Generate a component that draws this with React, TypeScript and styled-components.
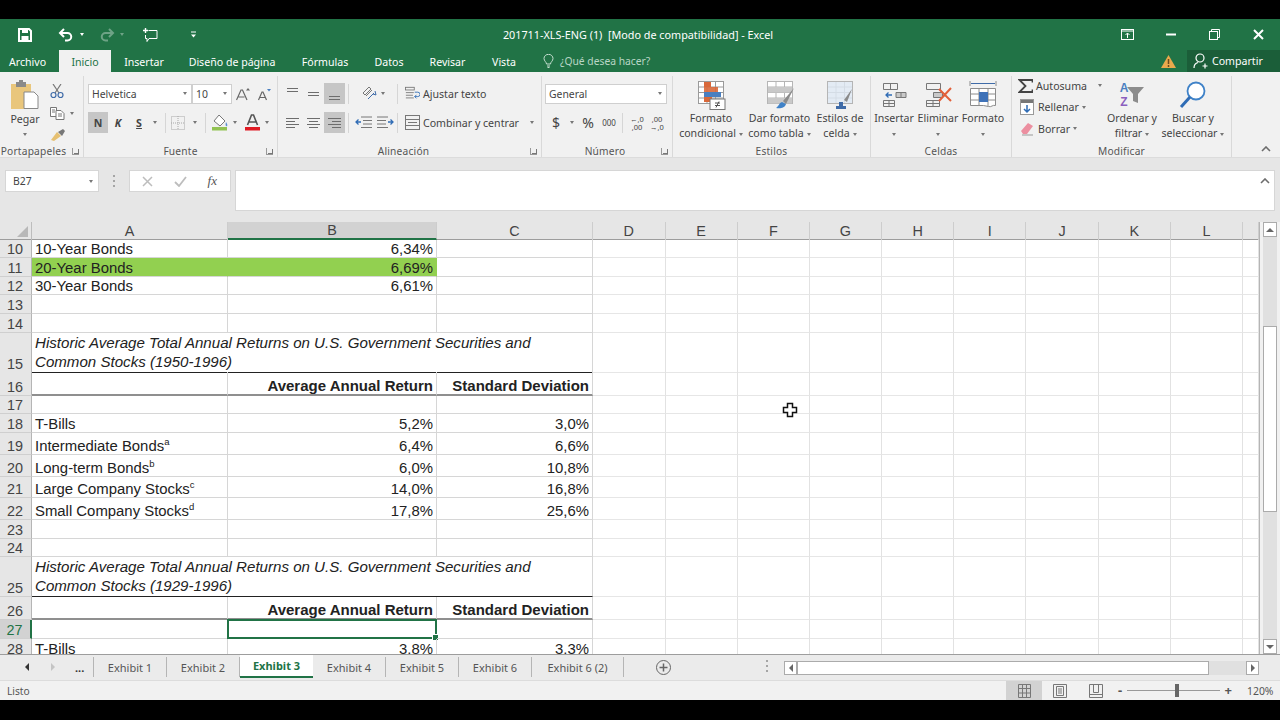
import React from 'react'
import styled, { createGlobalStyle } from 'styled-components'

const GlobalStyle = createGlobalStyle`
    html, body { margin: 0; padding: 0; background: #000; }
    * { box-sizing: border-box; }
`

const uiFont = `'Noto Sans', 'Open Sans', sans-serif`
const sheetFont = `'Liberation Sans', Arial, sans-serif`
const green = '#217346'

const Page = styled.div`
    width: 1280px;
    height: 720px;
    background: #000;
    padding: 19px 0 20px;
    display: flex;
    flex-direction: column;
    overflow: hidden;
    font-family: ${uiFont};
`

/* title bar */
const TitleBar = styled.div`
    height: 31px;
    flex: none;
    background: ${green};
    color: #fff;
    display: grid;
    grid-template-columns: 1fr auto 1fr;
    align-items: center;
`
const Qat = styled.div`
    display: flex;
    align-items: center;
    padding-left: 17px;
`
const QatSlot = styled.div<{ $w: number; $l?: number }>`
    width: ${p => p.$w}px;
    margin-left: ${p => p.$l ?? 0}px;
    display: flex;
    justify-content: center;
    align-items: center;
    flex: none;
`
const Title = styled.div`
    font-size: 10.8px;
    margin-right: 4px;
    white-space: pre;
`
const WindowButtons = styled.div`
    display: flex;
    justify-content: flex-end;
`
const WindowButton = styled.div`
    width: 43.5px;
    height: 30px;
    display: flex;
    align-items: center;
    justify-content: center;
`

/* ribbon tabs */
const TabRow = styled.div`
    height: 22px;
    flex: none;
    background: ${green};
    display: flex;
    align-items: stretch;
`
const RibbonTab = styled.div<{ $w: number; $active?: boolean }>`
    width: ${p => p.$w}px;
    flex: none;
    margin-left: ${p => (p.$active ? 4 : 0)}px;
    display: flex;
    align-items: center;
    justify-content: center;
    font-size: 10.6px;
    padding-top: 1px;
    color: ${p => (p.$active ? green : '#fff')};
    background: ${p => (p.$active ? '#f1f1f1' : 'transparent')};
`
const Search = styled.div`
    margin-left: 15px;
    display: flex;
    align-items: center;
    gap: 6px;
    font-size: 10.3px;
    color: #b9d6c5;
`
const TabRight = styled.div`
    margin-left: auto;
    display: flex;
    align-items: center;
`
const Share = styled.div`
    width: 93px;
    margin-left: 11px;
    height: 100%;
    background: #1b5e39;
    color: #fff;
    font-size: 10.6px;
    display: flex;
    align-items: center;
    gap: 4px;
    padding-left: 6px;
`

/* ribbon */
const Ribbon = styled.div`
    height: 86px;
    flex: none;
    background: #f1f1f1;
    padding-top: 4px;
    display: flex;
    color: #444;
    font-size: 10.6px;
    border-bottom: 1px solid #dcdcdc;
`
const Group = styled.div<{ $w: number }>`
    width: ${p => p.$w}px;
    height: 81px;
    flex: none;
    display: flex;
    flex-direction: column;
    border-right: 1px solid #d9d9d9;
`
const GroupBody = styled.div<{ $pad?: number; $top?: number }>`
    height: 69px;
    display: flex;
    padding-left: ${p => p.$pad ?? 0}px;
    padding-top: ${p => p.$top ?? 0}px;
`
const Stack = styled.div`
    display: flex;
    flex-direction: column;
    gap: 8px;
`
const ToolRow = styled.div`
    display: flex;
    align-items: center;
    height: 21px;
`
const GroupLabel = styled.div<{ $shift?: number }>`
    position: relative;
    height: 12px;
    line-height: 13px;
    text-align: center;
    font-size: 10.2px;
    color: #555;
    letter-spacing: 0.2px;
    padding-right: ${p => p.$shift ?? 0}px;
`
const Launcher = styled.span`
    position: absolute;
    right: 4px;
    top: 3px;
    width: 7px;
    height: 7px;
    border-left: 1px solid #999;
    border-bottom: 1px solid #999;
    &::after {
        content: '';
        position: absolute;
        right: 0;
        bottom: 0;
        width: 4px;
        height: 4px;
        border-right: 1px solid #777;
        border-bottom: 1px solid #777;
    }
`
const Tool = styled.div<{ $w: number; $on?: boolean; $bold?: boolean; $size?: number; $l?: number }>`
    width: ${p => p.$w}px;
    height: 21px;
    flex: none;
    margin-left: ${p => p.$l ?? 0}px;
    display: flex;
    align-items: center;
    justify-content: center;
    background: ${p => (p.$on ? '#c6c6c6' : 'transparent')};
    font-weight: ${p => (p.$bold ? 700 : 400)};
    font-size: ${p => p.$size ?? 10.6}px;
`
const DecimalTool = styled(Tool)`
    font-size: 7.5px;
    line-height: 8px;
    text-align: center;
`
const Sep = styled.span<{ $l?: number; $r?: number }>`
    width: 1px;
    height: 20px;
    flex: none;
    margin-left: ${p => p.$l ?? 0}px;
    margin-right: ${p => p.$r ?? 0}px;
    background: #d6d6d6;
`
const Caret = styled.span<{ $l?: number; $t?: number; $color?: string }>`
    display: inline-block;
    width: 0;
    height: 0;
    flex: none;
    vertical-align: middle;
    margin-left: ${p => p.$l ?? 0}px;
    margin-top: ${p => p.$t ?? 0}px;
    border-left: 2.5px solid transparent;
    border-right: 2.5px solid transparent;
    border-top: 3px solid ${p => p.$color ?? '#777'};
`
const SelectBox = styled.div<{ $w: number }>`
    width: ${p => p.$w}px;
    height: 20px;
    flex: none;
    background: #fff;
    border: 1px solid #cfcfcf;
    display: flex;
    align-items: center;
    justify-content: space-between;
    padding: 0 4px 0 3px;
    font-size: 10.4px;
`
const TextTool = styled.div`
    display: flex;
    align-items: center;
    gap: 3px;
    margin-left: 7px;
    white-space: nowrap;
`
const Large = styled.div<{ $w: number }>`
    width: ${p => p.$w}px;
    flex: none;
    display: flex;
    flex-direction: column;
    align-items: center;
    line-height: 15px;
    text-align: center;
    white-space: nowrap;
`
const LargeIcon = styled.div`
    height: 35px;
    display: flex;
    align-items: center;
    padding-top: 2px;
`
const PasteColumn = styled.div`
    width: 50px;
    display: flex;
    flex-direction: column;
    align-items: center;
    line-height: 15px;
`
const PasteLabel = styled.span`
    margin-top: 3px;
`
const ClipColumn = styled.div`
    display: flex;
    flex-direction: column;
    align-items: flex-start;
    gap: 3px;
    padding-top: 2px;
`
const ClipItem = styled.div`
    height: 19px;
    display: flex;
    align-items: center;
    gap: 5px;
`
const EditColumn = styled.div`
    width: 90px;
    flex: none;
    display: flex;
    flex-direction: column;
    padding-left: 6px;
    margin-top: -1px;
`
const EditItem = styled.div`
    height: 21.5px;
    display: flex;
    align-items: center;
    gap: 3px;
    white-space: nowrap;
`
const EditIcon = styled.span`
    width: 17px;
    display: flex;
    justify-content: center;
`
const SortLetters = styled.div`
    display: flex;
    flex-direction: column;
    margin: 0 -1px 0 0;
    font-family: ${sheetFont};
    font-size: 12px;
    line-height: 14px;
    font-weight: 700;
`
const SortLetter = styled.span<{ $color: string }>`
    color: ${p => p.$color};
`
const Collapse = styled.div`
    flex: 1;
    display: flex;
    justify-content: flex-end;
    align-items: flex-end;
    padding: 0 9px 5px 0;
`

/* formula bar */
const FormulaBar = styled.div`
    height: 64px;
    flex: none;
    background: #e6e6e6;
    display: flex;
    align-items: flex-start;
    padding: 12px 5px 0 5px;
`
const NameBox = styled.div`
    width: 94px;
    height: 22px;
    background: #fff;
    border: 1px solid #d6d6d6;
    display: flex;
    align-items: center;
    justify-content: space-between;
    padding: 0 5px 0 7px;
    font-size: 10.4px;
    color: #444;
`
const Grip = styled.div`
    width: 30px;
    height: 22px;
    display: flex;
    align-items: center;
    justify-content: center;
`
const FxBox = styled.div`
    width: 102px;
    height: 22px;
    background: #fff;
    border: 1px solid #d6d6d6;
    display: flex;
    align-items: center;
    justify-content: space-between;
    padding: 0 13px 0 12px;
    color: #555;
`
const Fx = styled.i`
    font-family: 'Liberation Serif', serif;
    font-size: 13px;
`
const FormulaInput = styled.div`
    flex: 1;
    margin-left: 4px;
    height: 41px;
    background: #fff;
    border: 1px solid #d6d6d6;
    display: flex;
    justify-content: flex-end;
    padding: 7px 4px 0 0;
`

/* sheet */
const SheetArea = styled.div`
    height: 432px;
    flex: none;
    display: flex;
    background: #f1f1f1;
`
const columns = '32px 196px 209px 156px 72.5px repeat(8, 72.2px) 1fr'
const Sheet = styled.div`
    position: relative;
    width: 1260px;
    flex: none;
    overflow: hidden;
    background: #fff;
    border-right: 1px solid #b5b5b5;
    font-family: ${sheetFont};
    color: #222;
`
const HeadRow = styled.div`
    height: 18px;
    display: grid;
    grid-template-columns: ${columns};
    background: #e6e6e6;
    border-bottom: 1px solid #9d9d9d;
`
const HeadCell = styled.div<{ $on?: boolean }>`
    display: flex;
    align-items: center;
    justify-content: center;
    font-size: 14.4px;
    color: #444;
    background: ${p => (p.$on ? '#d2d2d2' : 'transparent')};
    border-right: 1px solid #cdcdcd;
    border-bottom: ${p => (p.$on ? `2px solid ${green}` : 'none')};
    height: ${p => (p.$on ? '18px' : 'auto')};
`
const Corner = styled.div`
    display: flex;
    justify-content: flex-end;
    align-items: flex-end;
    padding: 0 3px 3px 0;
    border-right: 1px solid #bdbdbd;
`
const SheetRow = styled.div<{ $h: number }>`
    height: ${p => p.$h}px;
    display: grid;
    grid-template-columns: ${columns};
`
const RowNum = styled.div<{ $on?: boolean }>`
    background: ${p => (p.$on ? '#d2d2d2' : '#e6e6e6')};
    color: ${p => (p.$on ? green : '#444')};
    border-right: ${p => (p.$on ? `2px solid ${green}` : '1px solid #b5b5b5')};
    border-bottom: 1px solid #cfcfcf;
    display: flex;
    align-items: flex-end;
    justify-content: center;
    font-size: 14.4px;
    line-height: 16px;
    padding-right: 1px;
`
const Cell = styled.div<{
    $span?: number
    $right?: boolean
    $bold?: boolean
    $fill?: boolean
    $rule?: 'dark' | 'gray'
    $faint?: boolean
}>`
    position: relative;
    grid-column: span ${p => p.$span ?? 1};
    display: flex;
    align-items: flex-end;
    justify-content: ${p => (p.$right ? 'flex-end' : 'flex-start')};
    padding: 0 3px;
    font-size: ${p => (p.$bold ? 15 : 14.9)}px;
    line-height: 16px;
    white-space: nowrap;
    font-weight: ${p => (p.$bold ? 700 : 400)};
    background: ${p => (p.$fill ? '#92d050' : 'transparent')};
    border-right: 1px solid ${p => (p.$fill ? '#92d050' : p.$faint ? '#e2e2e2' : '#d6d6d6')};
    border-bottom: ${p =>
        p.$rule === 'dark'
            ? '1px solid #222'
            : p.$rule === 'gray'
              ? '2px solid #8f8f8f'
              : `1px solid ${p.$faint ? '#e6e6e6' : '#d6d6d6'}`};
`
const Note = styled.div`
    font-style: italic;
    font-size: 15.1px;
    white-space: pre;
    line-height: 19px;
    padding-bottom: 1px;
`
const Sup = styled.sup`
    font-size: 9.5px;
    line-height: 0;
    position: relative;
    top: -6px;
    vertical-align: baseline;
`
const Selection = styled.div`
    position: absolute;
    left: -1px;
    top: -1px;
    right: -1px;
    bottom: -1px;
    border: 2px solid ${green};
    &::after {
        content: '';
        position: absolute;
        right: -4px;
        bottom: -4px;
        width: 5px;
        height: 5px;
        background: ${green};
        border: 1px solid #fff;
    }
`
const Cursor = styled.svg`
    position: absolute;
    left: 782px;
    top: 180px;
`

const VScroll = styled.div`
    width: 20px;
    flex: none;
    padding-left: 3px;
    display: flex;
    flex-direction: column;
`
const VTrack = styled.div`
    width: 14px;
    flex: 1;
    background: #e0e0e0;
    display: flex;
    flex-direction: column;
`
const ScrollButton = styled.div<{ $w?: number; $h?: number }>`
    width: ${p => p.$w ?? 14}px;
    height: ${p => p.$h ?? 15}px;
    flex: none;
    background: #fff;
    border: 1px solid #ababab;
    display: flex;
    align-items: center;
    justify-content: center;
`
const VThumb = styled.div`
    width: 14px;
    height: 186px;
    margin-top: 89px;
    margin-bottom: auto;
    background: #fff;
    border: 1px solid #ababab;
`

/* sheet tabs */
const SheetTabs = styled.div`
    height: 26px;
    flex: none;
    background: #ebebeb;
    border-top: 1px solid #9d9d9d;
    display: flex;
    align-items: flex-start;
    font-size: 11px;
    color: #555;
`
const TabNav = styled.div`
    width: 94px;
    height: 20px;
    flex: none;
    display: flex;
    align-items: center;
    padding-left: 23px;
    gap: 18px;
    border-right: 1px solid #b5b5b5;
    margin-top: 2px;
`
const Ellipsis = styled.span`
    font-weight: 700;
    color: #333;
`
const SheetTab = styled.div<{ $w: number; $active?: boolean }>`
    width: ${p => p.$w}px;
    flex: none;
    height: ${p => (p.$active ? '23px' : '20px')};
    margin-top: ${p => (p.$active ? 0 : 2)}px;
    display: flex;
    align-items: center;
    justify-content: center;
    color: ${p => (p.$active ? green : '#555')};
    font-weight: ${p => (p.$active ? 700 : 400)};
    background: ${p => (p.$active ? '#fff' : 'transparent')};
    border-right: ${p => (p.$active ? 'none' : '1px solid #b5b5b5')};
    border-bottom: ${p => (p.$active ? `2px solid ${green}` : 'none')};
`
const AddSheet = styled.div`
    margin: 5px 0 0 32px;
    display: flex;
`
const TabGrip = styled.div`
    margin: 5px 0 0 95px;
    display: flex;
`
const HScroll = styled.div`
    margin: 6px 0 0 15px;
    width: 475px;
    height: 14px;
    background: #e0e0e0;
    display: flex;
    justify-content: space-between;
`
const HThumb = styled.div`
    flex: none;
    width: 412px;
    margin-right: auto;
    height: 14px;
    background: #fff;
    border: 1px solid #ababab;
`

/* status bar */
const StatusBar = styled.div`
    height: 20px;
    flex: none;
    background: #f1f1f1;
    border-top: 1px solid #dcdcdc;
    display: flex;
    align-items: center;
    padding-left: 7px;
    font-size: 10.2px;
    color: #555;
`
const StatusRight = styled.div`
    margin-left: auto;
    height: 100%;
    display: flex;
    align-items: center;
`
const ViewButton = styled.div<{ $on?: boolean }>`
    width: 36px;
    height: 100%;
    display: flex;
    align-items: center;
    justify-content: center;
    background: ${p => (p.$on ? '#d2d2d2' : 'transparent')};
`
const Zoom = styled.div`
    width: 114px;
    margin-left: 4px;
    display: flex;
    align-items: center;
    justify-content: space-between;
`
const ZoomTrack = styled.div`
    position: relative;
    width: 93px;
    height: 1px;
    background: #999;
`
const ZoomThumb = styled.span`
    position: absolute;
    left: 48px;
    top: -6px;
    width: 4px;
    height: 13px;
    background: #666;
`
const ZoomSign = styled.span`
    font-size: 13px;
    font-weight: 700;
    color: #555;
    line-height: 1;
`
const ZoomValue = styled.span`
    width: 48px;
    padding-left: 15px;
    font-size: 10.4px;
`

/* icons */
const gray = '#6d6d6d'

const SaveIcon = () => (
    <svg width="16" height="16" viewBox="0 0 16 16">
        <path d="M2 2h10l2 2v10H2z" fill="none" stroke="#fff" strokeWidth="2" />
        <rect x="5" y="2" width="6" height="4" fill="#fff" />
        <rect x="4.5" y="9" width="7" height="5" fill="#fff" />
    </svg>
)
const UndoIcon = ({ color, flip }: { color: string; flip?: boolean }) => (
    <svg width="15" height="14" viewBox="0 0 15 14">
        <g transform={flip ? 'matrix(-1 0 0 1 15 0)' : undefined}>
            <path d="M6 1 2 5l4 4M2 5h7.5a3.6 3.6 0 0 1 0 7.5H7" fill="none" stroke={color} strokeWidth="2" />
        </g>
    </svg>
)
const TouchIcon = () => (
    <svg width="16" height="16" viewBox="0 0 16 16" fill="none" stroke="#fff">
        <path d="M6.5 3.500h8.500v8H7l-2 3v-3H3.500V8" />
        <path d="M3.500 1v5M1 3.500h5" strokeWidth="1.4" />
    </svg>
)
const CustomizeIcon = () => (
    <svg width="7" height="7" viewBox="0 0 7 7">
        <path d="M1 1h5" stroke="#fff" />
        <path d="M1 3.500h5L3.500 6.500z" fill="#fff" />
    </svg>
)
const RibbonDisplayIcon = () => (
    <svg width="13" height="11" viewBox="0 0 13 11" fill="none" stroke="#fff">
        <rect x=".5" y=".5" width="12" height="10" />
        <path d="M1 2h11" />
        <path d="M6.500 9V4.200M4.500 6l2-2 2 2" />
    </svg>
)
const MinimizeIcon = () => (
    <svg width="10" height="3" viewBox="0 0 10 3">
        <rect width="10" height="2" y=".5" fill="#fff" />
    </svg>
)
const RestoreIcon = () => (
    <svg width="11" height="11" viewBox="0 0 11 11" fill="none" stroke="#fff">
        <rect x=".5" y="2.500" width="8" height="8" />
        <path d="M2.500 2.500v-2h8v8h-2" />
    </svg>
)
const CloseIcon = () => (
    <svg width="11" height="11" viewBox="0 0 11 11">
        <path d="M1 1l9 9M10 1l-9 9" stroke="#fff" strokeWidth="2" />
    </svg>
)
const BulbIcon = () => (
    <svg width="11" height="14" viewBox="0 0 11 14" fill="none" stroke="#c7e0d1">
        <path d="M3.500 10C3.500 8 1 7 1 4.500a4.500 4.200 0 0 1 9 0C10 7 7.500 8 7.500 10z" />
        <path d="M4 12h3M4.500 13.500h2" />
    </svg>
)
const WarningIcon = () => (
    <svg width="15" height="13" viewBox="0 0 15 13">
        <path d="M7.500 0 15 13H0z" fill="#e9a94c" />
        <path d="M7.500 4v5M7.500 10v2" stroke="#6b4a1d" strokeWidth="1.500" />
    </svg>
)
const ShareIcon = () => (
    <svg width="15" height="16" viewBox="0 0 15 16" fill="none" stroke="#fff" strokeWidth="1.200">
        <circle cx="7" cy="5" r="4" />
        <path d="M1 15c0-3 2-5 4-5.500M9.500 13h5M12 10.500v5" />
    </svg>
)
const PasteIcon = () => (
    <svg width="28" height="29" viewBox="0 0 28 29">
        <rect x="0" y="4" width="20" height="25" fill="#e9c67c" />
        <rect x="5" y="2" width="10" height="5" fill="#8a8a8a" />
        <rect x="8" y="0" width="4" height="3" fill="#8a8a8a" />
        <path d="M13 12h10l4 4v12.500H13z" fill="#fff" stroke="#888" />
    </svg>
)
const CutIcon = () => (
    <svg width="14" height="15" viewBox="0 0 14 15" fill="none">
        <path d="M3 0l6 9M11 0L5 9" stroke="#777" strokeWidth="1.200" />
        <circle cx="3.500" cy="11" r="2.500" stroke="#3f6ba8" strokeWidth="1.200" />
        <circle cx="10.500" cy="11" r="2.500" stroke="#3f6ba8" strokeWidth="1.200" />
    </svg>
)
const CopyIcon = () => (
    <svg width="15" height="13" viewBox="0 0 15 13" fill="#fff" stroke="#777">
        <path d="M.5.500h6v9h-6z" />
        <path d="M6 3.500h5l3 3v6H6z" />
        <path d="M8 7h4M8 9h4M2 3h3M2 5h3" />
    </svg>
)
const BrushIcon = () => (
    <svg width="15" height="13" viewBox="0 0 15 13">
        <path d="M8 3l5-3 2 2-3 5z" fill="#777" />
        <path d="M1 11l6-8 4 4-7 5z" fill="#e6c071" />
    </svg>
)
const BorderIcon = () => (
    <svg width="14" height="14" viewBox="0 0 14 14" fill="none" stroke="#a8a8a8" strokeDasharray="1 1">
        <rect x=".5" y=".5" width="13" height="13" />
        <path d="M7 0v14M0 7h14" />
    </svg>
)
const FillIcon = () => (
    <svg width="17" height="17" viewBox="0 0 17 17">
        <path d="M7 1l6 6-5 5-6-5z" fill="#fff" stroke="#777" />
        <path d="M14 8c1 2 2 3 1 4s-2-1-1-4z" fill="#5b8fd0" />
        <rect y="13" width="15" height="3.500" fill="#92c353" />
    </svg>
)
const FontColorIcon = () => (
    <svg width="17" height="17" viewBox="0 0 17 17">
        <path d="M3.500 11 7.500 1h2l4 10M5 8h7" fill="none" stroke="#555" strokeWidth="1.600" />
        <rect x="1" y="13" width="15" height="3.500" fill="#e01b24" />
    </svg>
)
const GrowIcon = ({ down }: { down?: boolean }) => (
    <svg width="14" height="14" viewBox="0 0 14 14">
        <path
            d={down ? 'M1.500 13 5 5h1l3.500 8M3 10.500h5' : 'M.5 13 5 3h1.500l4.500 10M2.500 10h6'}
            fill="none"
            stroke="#666"
            strokeWidth="1.200"
        />
        <path d={down ? 'M10 2h4l-2 2.500z' : 'M10 3.500h4L12 1z'} fill={down ? '#4a7fc0' : '#666'} />
    </svg>
)
const LinesIcon = ({ rows, height = 14 }: { rows: [number, number, number][]; height?: number }) => (
    <svg width="15" height={height} viewBox={`0 0 15 ${height}`} stroke="#6d6d6d">
        {rows.map(([a, b, y], i) => (
            <path key={i} d={`M${a} ${y + 0.5}H${b}`} />
        ))}
    </svg>
)
const OrientIcon = () => (
    <svg width="15" height="15" viewBox="0 0 15 15" fill="none" stroke="#777">
        <path d="M1 7l6-6 2 2-6 6zM4 10l6-6" />
        <path d="M6 13l6-6M13 5l1 4-3-1" stroke="#3f6ba8" />
    </svg>
)
const IndentIcon = ({ right }: { right?: boolean }) => (
    <svg width="17" height="13" viewBox="0 0 17 13">
        <g transform={right ? 'matrix(-1 0 0 1 17 0)' : undefined}>
            <path d="M6 1h11M8 4.500h9M8 8h9M6 11.500h11" stroke="#777" />
            <path d="M6 6H1M3.500 3.500 1 6l2.500 2.500" fill="none" stroke="#2f6cb5" strokeWidth="1.300" />
        </g>
    </svg>
)
const WrapIcon = () => (
    <svg width="15" height="15" viewBox="0 0 17 15" fill="none" stroke="#777">
        <rect x=".5" y=".5" width="10" height="3" />
        <path d="M1 6.500h9M1 9.500h8M1 12.500h9" />
        <path d="M11 11h3.500a2 2 0 0 0 0-5H11M13 9l-2 2 2 2" stroke="#2f6cb5" />
    </svg>
)
const MergeIcon = () => (
    <svg width="15" height="15" viewBox="0 0 15 15" fill="none" stroke="#777">
        <rect x=".5" y=".5" width="14" height="14" />
        <path d="M0 4.500h15M0 10.500h15M3 7.500h9" />
    </svg>
)
const TableBase = ({ dim }: { dim?: boolean }) => (
    <g fill="#fff" stroke={dim ? '#b5b5b5' : '#9a9a9a'}>
        <rect x="2.500" y="1.500" width="25" height="22" />
        <path d="M2.500 7h25M2.500 12.500h25M2.500 18h25M11 1.500v22M19.500 1.500v22" fill="none" />
    </g>
)
const CondFormatIcon = () => (
    <svg width="30" height="30" viewBox="0 0 30 30">
        <TableBase />
        <rect x="8" y="2" width="7" height="5" fill="#d9683a" />
        <rect x="8" y="7" width="14" height="5" fill="#d9683a" opacity=".9" />
        <rect x="8" y="12" width="17" height="5" fill="#4a7fc0" />
        <rect x="8" y="17" width="8" height="5" fill="#d9683a" />
        <rect x="14" y="19" width="15" height="10.500" fill="#fff" stroke="#777" />
        <path d="M19 23h5M19 25.500h5M20 27.500l3-6" stroke="#555" fill="none" />
    </svg>
)
const TableFormatIcon = () => (
    <svg width="30" height="30" viewBox="0 0 30 30">
        <TableBase dim />
        <rect x="3" y="7" width="24" height="5.500" fill="#c9c9c9" />
        <rect x="3" y="18" width="24" height="5.500" fill="#c9c9c9" />
        <path d="M29 8 18 21l3 3z" fill="#8a8a8a" />
        <path d="M17 22c-3 1-3 4-6 6 4 1 9 0 10-4z" fill="#3f82c8" />
    </svg>
)
const CellStyleIcon = () => (
    <svg width="30" height="30" viewBox="0 0 30 30">
        <TableBase dim />
        <rect x="3" y="2" width="24" height="21" fill="#dce6f1" opacity=".8" />
        <rect x="11" y="26" width="10" height="3" fill="#3f6ba8" />
        <rect x="14" y="22" width="4" height="5" fill="#3f6ba8" />
        <path d="M27 9 19 20l3 2z" fill="#8a8a8a" />
    </svg>
)
const InsertIcon = () => (
    <svg width="26" height="26" viewBox="0 0 26 26" fill="none" stroke="#777">
        <path d="M2.500 1.500h14v6h-14zM9.500 1.500v6M2.500 18.500h11v6h-11zM8 18.500v6M2.500 21.500h11" />
        <path d="M15 10.500h10v5H15zM20 10.500v5" fill="#c9c9c9" />
        <path d="M11 13H5M7.500 10.500 5 13l2.500 2.500" stroke="#2f6cb5" strokeWidth="1.300" />
    </svg>
)
const DeleteIcon = () => (
    <svg width="28" height="26" viewBox="0 0 28 26" fill="none" stroke="#777">
        <path d="M2.500 1.500h14v6h-14zM2.500 18.500h13v6h-13zM9 18.500v6M2.500 21.500h13" />
        <path d="M9.500 10.500h9v5h-9z" fill="#c9c9c9" />
        <path d="M15 7l12 12M27 6 15 19" stroke="#e2603a" strokeWidth="2" />
    </svg>
)
const FormatCellIcon = () => (
    <svg width="28" height="30" viewBox="0 0 28 30" fill="none" stroke="#8c8c8c">
        <path d="M1 1v5M27 1v5" />
        <path d="M2 3.500h24" stroke="#3f6ba8" />
        <path d="M1.500 8.500h25v17c-3-1-4 2-7 1l-5-1H1.500z" fill="#fff" />
        <path d="M10 8.500v17M19 8.500v18M1.500 14h25M1.500 20h25" />
        <rect x="10" y="12" width="9" height="10" fill="#3f72b8" stroke="none" />
    </svg>
)
const SigmaIcon = () => (
    <svg width="15" height="14" viewBox="0 0 15 14">
        <path d="M14.500 3.500V1H1.500l6 6-6 6h13v-2.500" fill="none" stroke="#444" strokeWidth="1.800" />
    </svg>
)
const FillDownIcon = () => (
    <svg width="14" height="16" viewBox="0 0 14 16">
        <rect x=".5" y=".5" width="13" height="15" fill="#fff" stroke="#999" />
        <rect x="1" y="1" width="12" height="3" fill="#777" />
        <path d="M7 6v7M4 10l3 3 3-3" fill="none" stroke="#2f6cb5" strokeWidth="1.500" />
    </svg>
)
const EraserIcon = () => (
    <svg width="14" height="14" viewBox="0 0 14 14">
        <path d="M1 9l7-8 5 3-6 8H3z" fill="#ec8fa0" />
        <path d="M2 13h11" stroke="#999" />
    </svg>
)
const FunnelIcon = () => (
    <svg width="17" height="16" viewBox="0 0 17 16">
        <path d="M0 0h17l-6 7v9l-5-2V7z" fill="#8c8c8c" />
    </svg>
)
const FindIcon = () => (
    <svg width="28" height="28" viewBox="0 0 28 28" fill="none">
        <circle cx="17" cy="10" r="8.500" fill="#fff" stroke="#3f82c8" strokeWidth="1.800" />
        <path d="M11 16 2 26" stroke="#2f6cb5" strokeWidth="3" />
    </svg>
)
const Chevron = ({ color = gray }: { color?: string }) => (
    <svg width="10" height="6" viewBox="0 0 10 6">
        <path d="M1 5l4-4 4 4" fill="none" stroke={color} strokeWidth="1.600" />
    </svg>
)
const Triangle = ({ dir, color = '#666' }: { dir: 'up' | 'down' | 'left' | 'right'; color?: string }) => {
    const d = { up: 'M0 6h8L4 2z', down: 'M0 2h8L4 6z', left: 'M6 0v8L2 4z', right: 'M2 0v8l4-4z' }[dir]
    return (
        <svg width="8" height="8" viewBox="0 0 8 8">
            <path d={d} fill={color} />
        </svg>
    )
}
const GripDots = () => (
    <svg width="3" height="13" viewBox="0 0 3 13" fill="#a5a5a5">
        <rect y="0" width="2" height="2" />
        <rect y="5" width="2" height="2" />
        <rect y="10" width="2" height="2" />
    </svg>
)
const XMark = () => (
    <svg width="11" height="11" viewBox="0 0 11 11">
        <path d="M1 1l9 9M10 1l-9 9" stroke="#bdbdbd" strokeWidth="1.500" />
    </svg>
)
const CheckMark = () => (
    <svg width="13" height="11" viewBox="0 0 13 11">
        <path d="M1 6l4 4 7-9" fill="none" stroke="#bdbdbd" strokeWidth="1.800" />
    </svg>
)
const PlusCircle = () => (
    <svg width="15" height="15" viewBox="0 0 15 15" fill="none" stroke="#666">
        <circle cx="7.500" cy="7.500" r="7" />
        <path d="M7.500 3.500v8M3.500 7.500h8" strokeWidth="1.500" />
    </svg>
)
const ViewNormal = () => (
    <svg width="13" height="14" viewBox="0 0 13 14" fill="none" stroke="#777">
        <path d="M.5.500h12v13H.5zM4.500 0v14M8.500 0v14M0 4.500h13M0 9h13" />
    </svg>
)
const ViewPage = () => (
    <svg width="14" height="14" viewBox="0 0 14 14" fill="none" stroke="#777">
        <path d="M.5.500h13v13H.5z" />
        <path d="M3.500 2.500h7v9h-7zM5 5h4M5 7h4M5 9h4" />
    </svg>
)
const ViewBreak = () => (
    <svg width="14" height="14" viewBox="0 0 14 14" fill="none" stroke="#777">
        <path d="M.5.500h13v13H.5z" />
        <path d="M4.500.500v8h5v-8M.5 10.500h13" />
    </svg>
)
const CornerMark = () => (
    <svg width="11" height="11" viewBox="0 0 11 11">
        <path d="M11 0v11H0z" fill="#b8b8b8" />
    </svg>
)

/* data */
type Row = {
    n: number
    h: number
    a?: string
    sup?: string
    b?: string
    c?: string
    note?: [string, string]
    bold?: boolean
    fill?: boolean
    rule?: 'dark' | 'gray'
}

const noteOne = 'Historic Average Total Annual Returns on U.S. Government Securities and'
const rows: Row[] = [
    { n: 10, h: 18, a: '10-Year Bonds', b: '6,34%' },
    { n: 11, h: 19, a: '20-Year Bonds', b: '6,69%', fill: true },
    { n: 12, h: 18, a: '30-Year Bonds', b: '6,61%' },
    { n: 13, h: 19 },
    { n: 14, h: 19 },
    { n: 15, h: 39, note: [noteOne, 'Common Stocks (1950-1996)'], rule: 'dark' },
    { n: 16, h: 24, b: 'Average Annual Return', c: 'Standard Deviation', bold: true, rule: 'gray' },
    { n: 17, h: 18 },
    { n: 18, h: 19, a: 'T-Bills', b: '5,2%', c: '3,0%' },
    { n: 19, h: 22, a: 'Intermediate Bonds', sup: 'a', b: '6,4%', c: '6,6%' },
    { n: 20, h: 22, a: 'Long-term Bonds', sup: 'b', b: '6,0%', c: '10,8%' },
    { n: 21, h: 21, a: 'Large Company Stocks', sup: 'c', b: '14,0%', c: '16,8%' },
    { n: 22, h: 22, a: 'Small Company Stocks', sup: 'd', b: '17,8%', c: '25,6%' },
    { n: 23, h: 19 },
    { n: 24, h: 18 },
    { n: 25, h: 40, note: [noteOne, 'Common Stocks (1929-1996)'], rule: 'dark' },
    { n: 26, h: 23, b: 'Average Annual Return', c: 'Standard Deviation', bold: true, rule: 'gray' },
    { n: 27, h: 19 },
    { n: 28, h: 19, a: 'T-Bills', b: '3,8%', c: '3,3%' },
]
const headers = ['A', 'B', 'C', 'D', 'E', 'F', 'G', 'H', 'I', 'J', 'K', 'L', '']
const emptyColumns = Array.from({ length: 10 }, (_, i) => i)
const sheetTabs = ['Exhibit 1', 'Exhibit 2', 'Exhibit 3', 'Exhibit 4', 'Exhibit 5', 'Exhibit 6', 'Exhibit 6 (2)']
const tabWidths = [73, 73, 73, 73, 73, 73, 92]
const selectedRow = 27

const App = () => {
    return (
        <Page>
            <GlobalStyle />
            <TitleBar>
                <Qat>
                    <QatSlot $w={16}><SaveIcon /></QatSlot>
                    <QatSlot $w={16} $l={24}><UndoIcon color="#fff" /></QatSlot>
                    <QatSlot $w={18}><Caret $color="#fff" /></QatSlot>
                    <QatSlot $w={16} $l={8}><UndoIcon color="#6ea386" flip /></QatSlot>
                    <QatSlot $w={14}><Caret $color="#6ea386" /></QatSlot>
                    <QatSlot $w={28} $l={7}><TouchIcon /></QatSlot>
                    <QatSlot $w={58}><CustomizeIcon /></QatSlot>
                </Qat>
                <Title>201711-XLS-ENG (1)  [Modo de compatibilidad] - Excel</Title>
                <WindowButtons>
                    <WindowButton><RibbonDisplayIcon /></WindowButton>
                    <WindowButton><MinimizeIcon /></WindowButton>
                    <WindowButton><RestoreIcon /></WindowButton>
                    <WindowButton><CloseIcon /></WindowButton>
                </WindowButtons>
            </TitleBar>

            <TabRow>
                <RibbonTab $w={55}>Archivo</RibbonTab>
                <RibbonTab $w={52} $active>Inicio</RibbonTab>
                <RibbonTab $w={66}>Insertar</RibbonTab>
                <RibbonTab $w={110}>Diseño de página</RibbonTab>
                <RibbonTab $w={76}>Fórmulas</RibbonTab>
                <RibbonTab $w={52}>Datos</RibbonTab>
                <RibbonTab $w={65}>Revisar</RibbonTab>
                <RibbonTab $w={48}>Vista</RibbonTab>
                <Search><BulbIcon />¿Qué desea hacer?</Search>
                <TabRight>
                    <WarningIcon />
                    <Share><ShareIcon />Compartir</Share>
                </TabRight>
            </TabRow>

            <Ribbon>
                <Group $w={84}>
                    <GroupBody $top={4}>
                        <PasteColumn>
                            <PasteIcon />
                            <PasteLabel>Pegar</PasteLabel>
                            <Caret $t={6} />
                        </PasteColumn>
                        <ClipColumn>
                            <ClipItem><CutIcon /></ClipItem>
                            <ClipItem><CopyIcon /><Caret /></ClipItem>
                            <ClipItem><BrushIcon /></ClipItem>
                        </ClipColumn>
                    </GroupBody>
                    <GroupLabel $shift={16}>Portapapeles<Launcher /></GroupLabel>
                </Group>

                <Group $w={194}>
                    <GroupBody $pad={4} $top={7}>
                        <Stack>
                            <ToolRow>
                                <SelectBox $w={104}>Helvetica<Caret /></SelectBox>
                                <SelectBox $w={40}>10<Caret /></SelectBox>
                                <Tool $w={22}><GrowIcon /></Tool>
                                <Tool $w={20}><GrowIcon down /></Tool>
                            </ToolRow>
                            <ToolRow>
                                <Tool $w={20} $on $bold>N</Tool>
                                <Tool $w={20} $bold><i>K</i></Tool>
                                <Tool $w={22} $bold><u>S</u></Tool>
                                <Tool $w={10}><Caret /></Tool>
                                <Sep $l={5} />
                                <Tool $w={24}><BorderIcon /></Tool>
                                <Tool $w={10}><Caret /></Tool>
                                <Sep $l={5} $r={2} />
                                <Tool $w={24}><FillIcon /></Tool>
                                <Tool $w={6}><Caret /></Tool>
                                <Tool $w={24} $l={2}><FontColorIcon /></Tool>
                                <Tool $w={6}><Caret /></Tool>
                            </ToolRow>
                        </Stack>
                    </GroupBody>
                    <GroupLabel>Fuente<Launcher /></GroupLabel>
                </Group>

                <Group $w={264}>
                    <GroupBody $pad={4} $top={7}>
                        <Stack>
                            <ToolRow>
                                <Tool $w={21}><LinesIcon rows={[[2, 13, 1], [2, 13, 4]]} /></Tool>
                                <Tool $w={21}><LinesIcon rows={[[2, 13, 5], [2, 13, 8]]} /></Tool>
                                <Tool $w={21} $on><LinesIcon rows={[[2, 13, 9], [2, 13, 12]]} /></Tool>
                                <Sep $l={3} />
                                <Tool $w={48}><OrientIcon /><Caret $l={4} /></Tool>
                                <Sep />
                                <TextTool><WrapIcon />Ajustar texto</TextTool>
                            </ToolRow>
                            <ToolRow>
                                <Tool $w={21}><LinesIcon rows={[[1, 14, 1], [1, 10, 4], [1, 14, 7], [1, 10, 10]]} height={12} /></Tool>
                                <Tool $w={21}><LinesIcon rows={[[1, 14, 1], [3, 12, 4], [1, 14, 7], [3, 12, 10]]} height={12} /></Tool>
                                <Tool $w={21} $on><LinesIcon rows={[[1, 14, 1], [5, 14, 4], [1, 14, 7], [5, 14, 10]]} height={12} /></Tool>
                                <Sep $l={3} $r={3} />
                                <Tool $w={22}><IndentIcon /></Tool>
                                <Tool $w={23}><IndentIcon right /></Tool>
                                <Sep />
                                <TextTool>
                                    <MergeIcon />Combinar y centrar<Caret $l={8} />
                                </TextTool>
                            </ToolRow>
                        </Stack>
                    </GroupBody>
                    <GroupLabel $shift={12}>Alineación<Launcher /></GroupLabel>
                </Group>

                <Group $w={131}>
                    <GroupBody $pad={3} $top={7}>
                        <Stack>
                            <ToolRow><SelectBox $w={122}>General<Caret /></SelectBox></ToolRow>
                            <ToolRow>
                                <Tool $w={22} $size={14}>$</Tool>
                                <Tool $w={9}><Caret /></Tool>
                                <Tool $w={24} $size={14}>%</Tool>
                                <Tool $w={18} $size={8}>000</Tool>
                                <Sep $l={4} $r={2} />
                                <DecimalTool $w={24}>←,0<br />,00</DecimalTool>
                                <DecimalTool $w={16}>,00<br />→,0</DecimalTool>
                            </ToolRow>
                        </Stack>
                    </GroupBody>
                    <GroupLabel $shift={4}>Número<Launcher /></GroupLabel>
                </Group>

                <Group $w={198}>
                    <GroupBody $pad={1}>
                        <Large $w={74}>
                            <LargeIcon><CondFormatIcon /></LargeIcon>
                            Formato
                            <span>condicional<Caret $l={3} /></span>
                        </Large>
                        <Large $w={63}>
                            <LargeIcon><TableFormatIcon /></LargeIcon>
                            Dar formato
                            <span>como tabla<Caret $l={3} /></span>
                        </Large>
                        <Large $w={58}>
                            <LargeIcon><CellStyleIcon /></LargeIcon>
                            Estilos de
                            <span>celda<Caret $l={3} /></span>
                        </Large>
                    </GroupBody>
                    <GroupLabel>Estilos</GroupLabel>
                </Group>

                <Group $w={141}>
                    <GroupBody>
                        <Large $w={46}>
                            <LargeIcon><InsertIcon /></LargeIcon>
                            Insertar
                            <span><Caret /></span>
                        </Large>
                        <Large $w={42}>
                            <LargeIcon><DeleteIcon /></LargeIcon>
                            Eliminar
                            <span><Caret /></span>
                        </Large>
                        <Large $w={48}>
                            <LargeIcon><FormatCellIcon /></LargeIcon>
                            Formato
                            <span><Caret /></span>
                        </Large>
                    </GroupBody>
                    <GroupLabel>Celdas</GroupLabel>
                </Group>

                <Group $w={220}>
                    <GroupBody>
                        <EditColumn>
                            <EditItem><EditIcon><SigmaIcon /></EditIcon>Autosuma<Caret $l={8} /></EditItem>
                            <EditItem><EditIcon><FillDownIcon /></EditIcon>Rellenar<Caret /></EditItem>
                            <EditItem><EditIcon><EraserIcon /></EditIcon>Borrar<Caret /></EditItem>
                        </EditColumn>
                        <Large $w={60}>
                            <LargeIcon>
                                <SortLetters>
                                    <SortLetter $color="#4a7fc0">A</SortLetter>
                                    <SortLetter $color="#8a5fbe">Z</SortLetter>
                                </SortLetters>
                                <FunnelIcon />
                            </LargeIcon>
                            Ordenar y
                            <span>filtrar<Caret $l={3} /></span>
                        </Large>
                        <Large $w={62}>
                            <LargeIcon><FindIcon /></LargeIcon>
                            Buscar y
                            <span>seleccionar<Caret $l={3} /></span>
                        </Large>
                    </GroupBody>
                    <GroupLabel>Modificar</GroupLabel>
                </Group>
                <Collapse><Chevron /></Collapse>
            </Ribbon>

            <FormulaBar>
                <NameBox>B27<Caret /></NameBox>
                <Grip><GripDots /></Grip>
                <FxBox><XMark /><CheckMark /><Fx>fx</Fx></FxBox>
                <FormulaInput><Chevron /></FormulaInput>
            </FormulaBar>

            <SheetArea>
                <Sheet>
                    <HeadRow>
                        <Corner><CornerMark /></Corner>
                        {headers.map(h => (
                            <HeadCell key={h} $on={h === 'B'}>{h}</HeadCell>
                        ))}
                    </HeadRow>
                    {rows.map(row => (
                        <SheetRow key={row.n} $h={row.h}>
                            <RowNum $on={row.n === selectedRow}>{row.n}</RowNum>
                            {row.note ? (
                                <Cell $span={3} $rule={row.rule}>
                                    <Note>{row.note[0]}{'\n'}{row.note[1]}</Note>
                                </Cell>
                            ) : (
                                <>
                                    <Cell $fill={row.fill} $rule={row.rule}>
                                        <span>
                                            {row.a}
                                            {row.sup && <Sup>{row.sup}</Sup>}
                                        </span>
                                    </Cell>
                                    <Cell $right $bold={row.bold} $fill={row.fill} $rule={row.rule}>
                                        {row.b}
                                        {row.n === selectedRow && <Selection />}
                                    </Cell>
                                    <Cell $right $bold={row.bold} $rule={row.rule}>{row.c}</Cell>
                                </>
                            )}
                            {emptyColumns.map(i => (
                                <Cell key={i} $faint />
                            ))}
                        </SheetRow>
                    ))}
                    <Cursor width="16" height="16" viewBox="0 0 16 16">
                        <path
                            d="M5.500 1.500h5v4h4v5h-4v4h-5v-4h-4v-5h4z"
                            fill="#fff"
                            stroke="#111"
                            strokeWidth="1.500"
                        />
                    </Cursor>
                </Sheet>
                <VScroll>
                    <VTrack>
                        <ScrollButton><Triangle dir="up" /></ScrollButton>
                        <VThumb />
                        <ScrollButton><Triangle dir="down" /></ScrollButton>
                    </VTrack>
                </VScroll>
            </SheetArea>

            <SheetTabs>
                <TabNav>
                    <Triangle dir="left" color="#333" />
                    <Triangle dir="right" color="#c4c4c4" />
                    <Ellipsis>...</Ellipsis>
                </TabNav>
                {sheetTabs.map((name, i) => (
                    <SheetTab key={name} $w={tabWidths[i]} $active={name === 'Exhibit 3'}>{name}</SheetTab>
                ))}
                <AddSheet><PlusCircle /></AddSheet>
                <TabGrip><GripDots /></TabGrip>
                <HScroll>
                    <ScrollButton $w={13} $h={14}><Triangle dir="left" /></ScrollButton>
                    <HThumb />
                    <ScrollButton $w={13} $h={14}><Triangle dir="right" /></ScrollButton>
                </HScroll>
            </SheetTabs>

            <StatusBar>
                Listo
                <StatusRight>
                    <ViewButton $on><ViewNormal /></ViewButton>
                    <ViewButton><ViewPage /></ViewButton>
                    <ViewButton><ViewBreak /></ViewButton>
                    <Zoom>
                        <ZoomSign>-</ZoomSign>
                        <ZoomTrack><ZoomThumb /></ZoomTrack>
                        <ZoomSign>+</ZoomSign>
                    </Zoom>
                    <ZoomValue>120%</ZoomValue>
                </StatusRight>
            </StatusBar>
        </Page>
    )
}

export default App
